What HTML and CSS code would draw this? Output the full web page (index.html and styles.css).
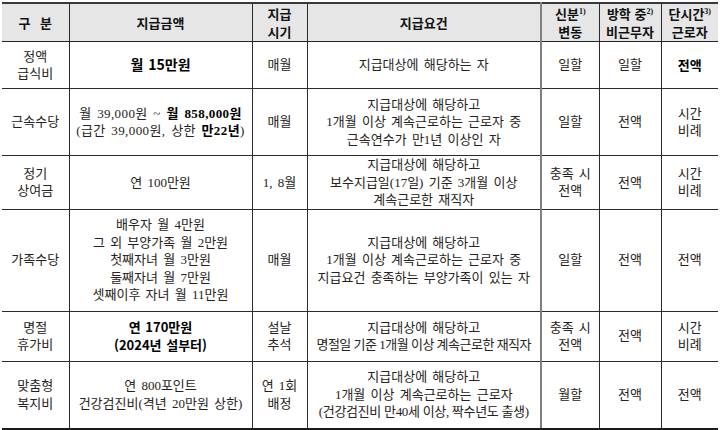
FILE: index.html
```html
<!DOCTYPE html>
<html lang="ko">
<head>
<meta charset="utf-8">
<link rel="stylesheet" href="styles.css">
</head>
<body>
<table class="pay">
  <colgroup>
    <col class="c1"><col class="c2"><col class="c3"><col class="c4"><col class="c5"><col class="c6"><col class="c7">
  </colgroup>
  <thead>
    <tr class="head">
      <th class="wide">구 분</th>
      <th>지급금액</th>
      <th>지급<br>시기</th>
      <th class="req">지급요건</th>
      <th>신분<sup>1)</sup><br>변동</th>
      <th>방학 중<sup>2)</sup><br>비근무자</th>
      <th class="last">단시간<sup>3)</sup><br>근로자</th>
    </tr>
  </thead>
  <tbody>
    <tr class="r1">
      <td>정액<br>급식비</td>
      <td class="amt"><b class="big">월 15만원</b></td>
      <td>매월</td>
      <td class="req">지급대상에 해당하는 자</td>
      <td>일할</td>
      <td>일할</td>
      <td class="last"><b>전액</b></td>
    </tr>
    <tr class="r2">
      <td>근속수당</td>
      <td class="amt tight">월 39,000원 ~ <b>월 858,000원</b><br>(급간 39,000원, 상한 <b>만22년</b>)</td>
      <td>매월</td>
      <td class="req">지급대상에 해당하고<br>1개월 이상 계속근로하는 근로자 중<br>근속연수가 만1년 이상인 자</td>
      <td>일할</td>
      <td>전액</td>
      <td class="last">시간<br>비례</td>
    </tr>
    <tr class="r3">
      <td>정기<br>상여금</td>
      <td class="amt">연 100만원</td>
      <td>1, 8월</td>
      <td class="req">지급대상에 해당하고<br>보수지급일(17일) 기준 3개월 이상<br>계속근로한 재직자</td>
      <td>충족 시<br>전액</td>
      <td>전액</td>
      <td class="last">시간<br>비례</td>
    </tr>
    <tr class="r4">
      <td>가족수당</td>
      <td class="amt">배우자 월 4만원<br>그 외 부양가족 월 2만원<br>첫째자녀 월 3만원<br>둘째자녀 월 7만원<br>셋째이후 자녀 월 11만원</td>
      <td>매월</td>
      <td class="req">지급대상에 해당하고<br>1개월 이상 계속근로하는 근로자 중<br>지급요건 충족하는 부양가족이 있는 자</td>
      <td>일할</td>
      <td>전액</td>
      <td class="last">전액</td>
    </tr>
    <tr class="r5">
      <td>명절<br>휴가비</td>
      <td class="amt"><b>연 170만원<br>(2024년 설부터)</b></td>
      <td>설날<br>추석</td>
      <td class="req">지급대상에 해당하고<br><span class="squeeze">명절일 기준 1개월 이상 계속근로한 재직자</span></td>
      <td>충족 시<br>전액</td>
      <td>전액</td>
      <td class="last">시간<br>비례</td>
    </tr>
    <tr class="r6">
      <td>맞춤형<br>복지비</td>
      <td class="amt">연 800포인트<br>건강검진비(격년 20만원 상한)</td>
      <td>연 1회<br>배정</td>
      <td class="req">지급대상에 해당하고<br>1개월 이상 계속근로하는 근로자<br><span class="squeeze2">(건강검진비 만40세 이상, 짝수년도 출생)</span></td>
      <td>월할</td>
      <td>전액</td>
      <td class="last">전액</td>
    </tr>
  </tbody>
</table>
</body>
</html>
```
FILE: styles.css
```css
html, body {
  margin: 0;
  padding: 0;
  background: #ffffff;
}

body {
  padding: 2px 0 0 2px;
  font-family: "Liberation Serif", "Noto Sans CJK KR", serif;
  font-size: 13px;
  color: #262220;
}

.pay {
  border-collapse: collapse;
  table-layout: fixed;
  width: 716px;
  border-top: 2px solid #3a3a3a;
  border-bottom: 3px solid #1a1a1a;
}

.c1 { width: 67px; }
.c2 { width: 183px; }
.c3 { width: 55px; }
.c4 { width: 234px; }
.c5 { width: 58px; }
.c6 { width: 62px; }
.c7 { width: 57px; }

.pay th,
.pay td {
  border-left: 1px solid #2a2a2a;
  border-bottom: 1px solid #2a2a2a;
  text-align: center;
  vertical-align: middle;
  padding: 0 1px;
  overflow: hidden;
  white-space: nowrap;
}

.pay th:first-child,
.pay td:first-child {
  border-left: none;
}

.pay th.last,
.pay td.last {
  border-right: none;
}

.pay td.req,
.pay th.req {
  border-right: 2px solid #808080;
}

.pay td {
  line-height: 17.5px;
  word-spacing: 2px;
}

.head th {
  background: #e6e6e6;
  font-family: "Noto Sans CJK KR", sans-serif;
  font-weight: 700;
  font-size: 13px;
  line-height: 18px;
  color: #111;
  height: 37px;
  padding: 0 1px;
  border-bottom: 1px solid #222;
}

.head th.wide {
  word-spacing: 6px;
}

.head sup {
  font-size: 8px;
  line-height: 0;
  vertical-align: 5px;
  font-family: "Liberation Serif", serif;
}

.r1 td { height: 46px; }
.r2 td { height: 66px; }
.r3 td { height: 52px; }
.r4 td { height: 101px; }
.r5 td { height: 49px; }
.r6 td { height: 66px; }

b {
  font-weight: 700;
  color: #000;
}

.big {
  font-family: "Noto Sans CJK KR", sans-serif;
  font-size: 14px;
  word-spacing: 1px;
}

.r1 .last b,
.r5 .amt b {
  font-family: "Noto Sans CJK KR", sans-serif;
}

.r5 .amt b {
  font-size: 13px;
  line-height: 18px;
  word-spacing: 1px;
}

.tight {
  letter-spacing: 0.4px;
  word-spacing: 3px;
}

.squeeze {
  letter-spacing: -0.5px;
  word-spacing: 0;
}

.squeeze2 {
  letter-spacing: -0.3px;
  word-spacing: 0;
}
```
